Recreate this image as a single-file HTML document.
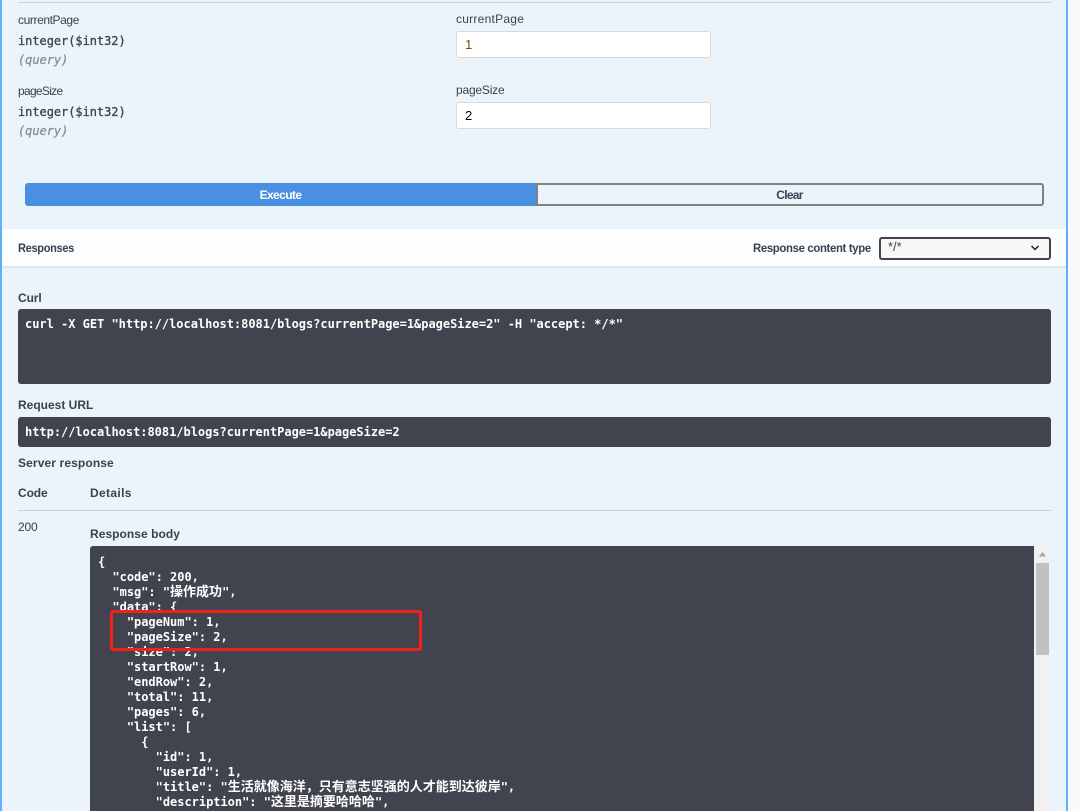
<!DOCTYPE html>
<html><head><meta charset="utf-8">
<style>
html,body{margin:0;padding:0;background:#fafafa}
#p{position:relative;width:1080px;height:811px;overflow:hidden;background:#fafafa;font-family:"Liberation Sans",sans-serif;color:#3b4151}
#p div{position:absolute;white-space:pre}
.s{font-family:"Liberation Sans",sans-serif;font-size:12px;line-height:16px;letter-spacing:-.2px}
.b{font-family:"Liberation Sans",sans-serif;font-size:12px;font-weight:bold;line-height:16px;letter-spacing:-.35px;transform-origin:left center}
.m{font-family:"DejaVu Sans Mono",monospace;font-size:12px;line-height:15px;color:#3b4151;-webkit-text-stroke:.3px #3b4151;letter-spacing:-.05px}
.q{font-family:"DejaVu Sans Mono",monospace;font-size:12px;font-style:italic;line-height:15px;color:#8b8e96;-webkit-text-stroke:.3px #8b8e96;letter-spacing:-.05px}
.inp{background:#fff;border:1px solid #d9d9d9;border-radius:3px;box-sizing:border-box;width:255px;height:27px;font-family:"Liberation Sans",sans-serif;font-size:13px;line-height:25px;padding-left:8px;color:#000}
.d{background:#41444e;border-radius:3px}
.w{font-family:"DejaVu Sans Mono",monospace;font-size:12px;font-weight:bold;line-height:15px;color:#fff;letter-spacing:-.02px}
.w span{font-family:"Noto Sans CJK SC",sans-serif;font-size:13px;font-weight:bold;line-height:0;letter-spacing:0}
</style></head><body>
<div id="p">
<div style="left:0;top:0;width:1068px;height:811px;background:#ebf3fb;border-left:2px solid #61affe;border-right:2px solid #61affe;box-sizing:border-box"></div>
<div style="left:18px;top:2px;width:1033px;height:1px;background:#c8d2e0"></div>

<div class="s" style="left:18px;top:12px;letter-spacing:-.4px">currentPage</div>
<div class="m" style="left:18px;top:34px">integer($int32)</div>
<div class="q" style="left:18px;top:53px">(query)</div>
<div class="s" style="left:456px;top:11px;letter-spacing:.25px">currentPage</div>
<div class="inp" style="left:456px;top:31px;color:#7a4a00">1</div>

<div class="s" style="left:18px;top:83px;letter-spacing:-.7px">pageSize</div>
<div class="m" style="left:18px;top:105px">integer($int32)</div>
<div class="q" style="left:18px;top:124px">(query)</div>
<div class="s" style="left:456px;top:82px">pageSize</div>
<div class="inp" style="left:456px;top:102px">2</div>

<div style="left:25px;top:183px;width:511px;height:23px;background:#4990e2;border-radius:3px 0 0 3px"></div>
<div class="b" style="left:25px;top:187px;width:511px;text-align:center;color:#fff;letter-spacing:-.6px">Execute</div>
<div style="left:536px;top:183px;width:508px;height:23px;box-sizing:border-box;border:2px solid #808080;border-radius:0 3px 3px 0"></div>
<div class="b" style="left:536px;top:187px;width:507px;text-align:center;letter-spacing:-.7px">Clear</div>

<div style="left:2px;top:229px;width:1064px;height:37px;background:#fbfdfe;box-shadow:0 1px 2px rgba(0,0,0,.1)"></div>
<div class="b" style="left:18px;top:240px;transform:scaleX(.92)">Responses</div>
<div class="b" style="left:753px;top:240px;transform:scaleX(.945)">Response content type</div>
<div style="left:879px;top:237px;width:172px;height:23px;box-sizing:border-box;border:2px solid #41444e;border-radius:3px;background:#f7f7f7"></div>
<div class="b" style="left:888px;top:239px;font-size:13px;letter-spacing:0;font-weight:normal">*/*</div>
<svg style="position:absolute;left:1030px;top:243px" width="10" height="10" viewBox="0 0 10 10"><path d="M1.5 3 L5 6.5 L8.5 3" fill="none" stroke="#222" stroke-width="1.5"/></svg>

<div class="b" style="left:18px;top:290px;letter-spacing:-.1px">Curl</div>
<div class="d" style="left:18px;top:309px;width:1033px;height:75px"></div>
<div class="w" style="left:25px;top:317px">curl -X GET "http://localhost:8081/blogs?currentPage=1&amp;pageSize=2" -H "accept: */*"</div>

<div class="b" style="left:18px;top:397px;letter-spacing:0">Request URL</div>
<div class="d" style="left:18px;top:417px;width:1033px;height:30px"></div>
<div class="w" style="left:25px;top:425px">http://localhost:8081/blogs?currentPage=1&amp;pageSize=2</div>

<div class="b" style="left:18px;top:455px;letter-spacing:.12px">Server response</div>
<div class="b" style="left:18px;top:485px;letter-spacing:-.1px">Code</div>
<div class="b" style="left:90px;top:485px;letter-spacing:.35px">Details</div>
<div style="left:18px;top:510px;width:1033px;height:1px;background:#c8d2e0"></div>
<div class="s" style="left:18px;top:519px">200</div>
<div class="b" style="left:90px;top:526px;letter-spacing:.05px">Response body</div>

<div style="left:90px;top:546px;width:961px;height:265px;background:#f1f1f1;border-radius:3px 3px 0 0"></div>
<div style="left:90px;top:546px;width:944px;height:265px;background:#41444e;border-radius:3px 0 0 0"></div>
<svg style="position:absolute;left:1036px;top:550px" width="13" height="10" viewBox="0 0 13 10"><path d="M6.5 2 L10 6.5 L3 6.5 Z" fill="#a3a3a3"/></svg>
<div style="left:1036px;top:563px;width:13px;height:92px;background:#c1c1c1"></div>

<div class="w" style="left:98px;top:555px">{
  "code": 200,
  "msg": "<span>操作成功</span>",
  "data": {
    "pageNum": 1,
    "pageSize": 2,
    "size": 2,
    "startRow": 1,
    "endRow": 2,
    "total": 11,
    "pages": 6,
    "list": [
      {
        "id": 1,
        "userId": 1,
        "title": "<span>生活就像海洋，只有意志坚强的人才能到达彼岸</span>",
        "description": "<span>这里是摘要哈哈哈</span>",</div>
<div style="left:110px;top:610px;width:312px;height:41px;box-sizing:border-box;border:3px solid #f5201a;border-radius:3px"></div>
</div>
</body></html>
